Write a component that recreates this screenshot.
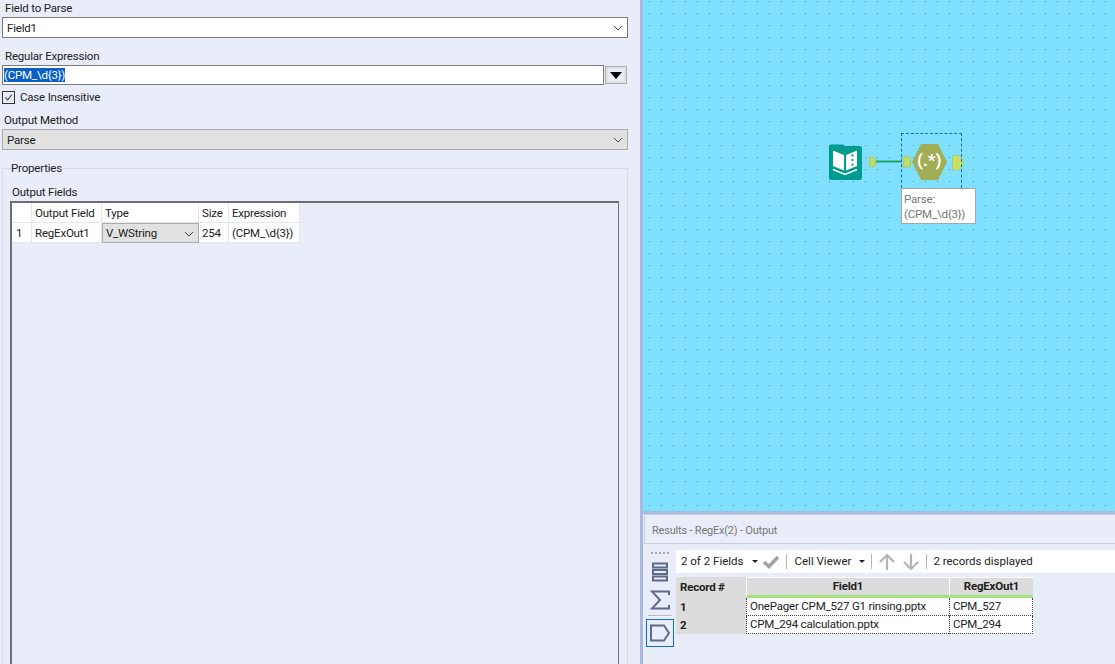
<div class="app">
  <section class="config">
    <label class="lbl first">Field to Parse</label>
    <div class="select"><span>Field1</span><svg class="chev" viewBox="0 0 10 6"><path d="M1 1l4 4 4-4" /></svg></div>

    <label class="lbl second">Regular Expression</label>
    <div class="regex">
      <div class="input"><span class="sel">(CPM_\d{'{'}3{'}'})</span></div>
      <div class="drop"><i></i></div>
    </div>

    <div class="check">
      <span class="box"><svg viewBox="0 0 13 13"><path d="M2.5 6.5l3 3 5-6.5" /></svg></span>
      <span>Case Insensitive</span>
    </div>

    <label class="lbl third">Output Method</label>
    <div class="select grey"><span>Parse</span><svg class="chev" viewBox="0 0 10 6"><path d="M1 1l4 4 4-4" /></svg></div>

    <fieldset class="props">
      <legend>Properties</legend>
      <div class="of">Output Fields</div>
      <div class="gridbox">
        <div class="grid">
          <div class="c n hd"></div>
          <div class="c f hd">Output Field</div>
          <div class="c t hd">Type</div>
          <div class="c s hd">Size</div>
          <div class="c e hd">Expression</div>
          <div class="c n">1</div>
          <div class="c f">RegExOut1</div>
          <div class="c t tsel"><span>V_WString</span><svg class="chev" viewBox="0 0 10 6"><path d="M1 1l4 4 4-4" /></svg></div>
          <div class="c s">254</div>
          <div class="c e">(CPM_\d{'{'}3{'}'})</div>
        </div>
      </div>
    </fieldset>
  </section>

  <div class="split"></div>

  <section class="right">
    <div class="canvas">
      <svg class="dots" width="472" height="511">
        <defs>
          <pattern id="dotp" x="6" y="1" width="12" height="12" patternUnits="userSpaceOnUse">
            <rect width="1" height="1" fill="#5f8a9c" />
          </pattern>
        </defs>
        <rect width="472" height="511" fill="url(#dotp)" />
      </svg>

      <svg class="wf" width="160" height="100" viewBox="0 0 160 100">
        <!-- input book tool -->
        <path d="M3 5.500a2 2 0 0 1 2-2h12l2 1.500h15a2 2 0 0 1 2 2v30a2 2 0 0 1-2 2H5a2 2 0 0 1-2-2z" fill="#009b8f" />
        <path d="M7 9.500l11 4.500v15.500L7 25zM31 9.500L20 14v15.500L31 25z" fill="#fff" />
        <path d="M7 28.500l12 5 12-5" fill="none" stroke="#fff" stroke-width="1.500" />
        <path d="M25.500 14.500h2M25.500 19h2M25.500 23.500h2" stroke="#009b8f" stroke-width="2" />
        <!-- out anchor -->
        <path d="M43.500 16h4l2.500 3v3.500L47.500 26h-4z" fill="#c2dc62" stroke="#9cc05a" stroke-width=".6" />
        <path d="M50 20.500h26" stroke="#22a55a" stroke-width="2" />
        <!-- in anchor -->
        <path d="M76 16h8.500v10H76l2-5z" fill="#c2dc62" stroke="#9cc05a" stroke-width=".6" />
        <!-- hexagon -->
        <path d="M95 3h17l9 18-9 18H95l-9-18z" fill="#a2ae55" />
        <!-- out -->
        <path d="M126.500 14.500h7l4 5v4l-4 5.500h-7z" fill="#c6e166" stroke="#9cc05a" stroke-width=".6" />
      </svg>
      <span class="hexlbl">(.*)</span>
      <div class="selbox"></div>
      <div class="ann">Parse:<br />(CPM_\d{'{'}3{'}'})</div>
    </div>

    <div class="results">
      <div class="rhead">Results - RegEx(2) - Output</div>
      <div class="rbody">
        <aside class="side">
          <div class="grip"></div>
          <svg class="ic one" viewBox="0 0 20 20" width="20" height="20"><g fill="none" stroke="#5d6b8a" stroke-width="2"><rect x="3" y="1.500" width="14" height="4"/><rect x="3" y="8" width="14" height="4"/><rect x="3" y="14.500" width="14" height="4"/></g></svg>
          <svg class="ic two" viewBox="0 0 20 20" width="20" height="20"><path d="M19 5V1.500H2l8 8.500-8 8.500h17V15" fill="none" stroke="#5d6b8a" stroke-width="2"/></svg>
          <div class="rule"></div>
          <div class="active"><svg viewBox="0 0 20 20" width="20" height="20"><path d="M1 2.500h13l5 7.500-5 7.500H1z" fill="none" stroke="#5d6b8a" stroke-width="2"/></svg></div>
        </aside>
        <div class="rmain">
          <div class="tools">
            <span>2 of 2 Fields</span><i class="caret"></i>
            <svg class="okc" width="18" height="14" viewBox="0 0 18 14"><path d="M2 7l5 4.500L16 2" fill="none" stroke="#a3a3a3" stroke-width="3.500"/></svg>
            <b class="bar"></b>
            <span class="cv">Cell Viewer</span><i class="caret"></i>
            <b class="bar"></b>
            <svg class="arr up" width="18" height="18" viewBox="0 0 18 18"><path d="M9 17V2M2 9l7-7 7 7" fill="none" stroke="#b5b5b5" stroke-width="2.200"/></svg>
            <svg class="arr down" width="18" height="18" viewBox="0 0 18 18"><path d="M9 1v15M2 9l7 7 7-7" fill="none" stroke="#b5b5b5" stroke-width="2.200"/></svg>
            <b class="bar"></b>
            <span class="rd">2 records displayed</span>
          </div>
          <div class="data">
            <div class="dh rec">Record #</div>
            <div class="dh col1 head">Field1</div>
            <div class="dh col2 head">RegExOut1</div>
            <div class="dr rec">1</div>
            <div class="dc col1">OnePager CPM_527 G1 rinsing.pptx</div>
            <div class="dc col2">CPM_527</div>
            <div class="dr rec">2</div>
            <div class="dc col1">CPM_294 calculation.pptx</div>
            <div class="dc col2">CPM_294</div>
          </div>
        </div>
      </div>
    </div>
  </section>
</div>

<style>
  :global(body) { margin: 0; background: #e9edf9; }
  .app {
    display: flex;
    width: 1115px;
    height: 664px;
    overflow: hidden;
    font: 11.500px/15px Roboto, "Noto Sans", sans-serif;
    letter-spacing: -0.2px;
    color: #222;
    background: #e9edf9;
  }
  .config { width: 640px; flex: none; padding: 0 12px 0 2px; box-sizing: border-box; display: flex; flex-direction: column; }
  .lbl { display: block; padding-left: 3px; height: 15px; }
  .first { margin-top: 0; margin-bottom: 2px; line-height: 17px; }
  .second { margin-top: 10px; margin-bottom: 2px; line-height: 17px; }
  .third { margin-top: 7px; margin-bottom: 2px; padding-left: 2px; line-height: 17px; }
  .select {
    height: 21px; box-sizing: border-box; border: 1px solid #7a7a7a; background: #fff;
    display: flex; align-items: center; justify-content: space-between; padding: 1px 4px 0; flex: none;
  }
  .select.grey { background: #e1e1e1; border-color: #adadad; }
  .chev { width: 10px; height: 6px; fill: none; stroke: #444; stroke-width: 1; }
  .regex { display: flex; gap: 1px; height: 20px; flex: none; }
  .input { width: 602px; box-sizing: border-box; border: 1px solid #7a7a7a; background: #fff; padding: 0 0 0 1px; display: flex; align-items: center; }
  .sel { background: #0a5fc4; color: #fff; line-height: 14px; }
  .drop { width: 22px; height: 18px; margin-top: 1px; box-sizing: border-box; border: 1px solid #adadad; background: #e1e1e1; padding: 2px; }
  .drop i { display: flex; height: 100%; background: #e9edf9; justify-content: center; align-items: center; }
  .drop i::after { content: ""; border: 6px solid transparent; border-top: 7px solid #000; border-bottom: 0; }
  .check { display: flex; align-items: center; gap: 5px; height: 15px; margin-top: 5px; }
  .box { width: 13px; height: 13px; box-sizing: border-box; border: 1px solid #333; background: #e9edf9; display: block; }
  .box svg { display: block; width: 11px; height: 11px; fill: none; stroke: #333; stroke-width: 1.200; }
  .props {
    margin: 11px 0 0; padding: 0 8px 0 7px; border: 1px solid #d9dbe4; border-bottom: 0; flex: 1; min-height: 0;
    min-width: 0; display: flex; flex-direction: column;
  }
  legend { padding: 0; margin-left: 1px; height: 15px; background: #e9edf9; line-height: 15px; }
  .of { margin: 8px 0 2px 2px; line-height: 17px; height: 15px; }
  .gridbox { flex: 1; box-sizing: border-box; border: 2px solid #6e6e6e; border-bottom: 0; border-width: 2px 1px 0 2px; }
  .grid { display: grid; grid-template-columns: 20px 70px 97px 30px 71px; grid-template-rows: 20px 20px; width: max-content; }
  .c { background: #fff; padding: 1px 3px 0; display: flex; align-items: center; border-right: 1px solid #e4e7f0; border-bottom: 1px solid #e4e7f0; white-space: nowrap; overflow: hidden; box-sizing: border-box; }
  .c.n { padding-left: 4px; }
  .tsel { background: #e1e1e1; border: 1px solid #adadad; justify-content: space-between; padding-right: 4px; }
  .split { width: 3px; background: #aab9e0; flex: none; }
  .right { flex: 1; min-width: 0; display: flex; flex-direction: column; }
  .canvas { height: 511px; flex: none; background: #80e0ff; position: relative; overflow: hidden; }
  .dots { position: absolute; left: 0; top: 0; }
  .wf { position: absolute; left: 183px; top: 141px; }
  .hexlbl { position: absolute; left: 274px; top: 150px; color: #fff; font-weight: 700; font-size: 17px; line-height: 20px; letter-spacing: 0; }
  .selbox { position: absolute; left: 258px; top: 133px; width: 59px; height: 54px; border: 1px dashed #0f6fd0; border-bottom: 0; }
  .ann { position: absolute; left: 258px; top: 188px; width: 75px; height: 36px; box-sizing: border-box; background: #fff; border: 1px solid #a6a6a6; color: #777; padding: 3px 0 0 2px; line-height: 14.500px; }
  .results { flex: 1; min-height: 0; display: flex; flex-direction: column; border-top: 3px solid #aab9e0; }
  .rhead { margin-left: 1px; height: 30px; box-sizing: border-box; border: 1px solid #cfcfd6; border-right: 0; padding: 8px 7px 0; color: #777; font-size: 11px; flex: none; }
  .rbody { flex: 1; display: flex; min-height: 0; margin-top: -1px; }
  .side { width: 33px; flex: none; display: flex; flex-direction: column; align-items: center; padding-top: 9px; box-sizing: border-box; }
  .grip { width: 18px; border-top: 2px dotted #9aa; margin-bottom: 8px; }
  .one { margin-bottom: 8px; }
  .two { margin-bottom: 4px; }
  .rule { width: 24px; border-top: 1px solid #bbb; margin: 1px 0 3px; }
  .active { width: 28px; height: 28px; box-sizing: border-box; border: 1px solid #0f6fd0; display: flex; align-items: center; justify-content: center; }
  .rmain { flex: 1; min-width: 0; padding-top: 7px; }
  .tools { height: 23px; background: #fff; display: flex; align-items: center; padding-left: 5px; white-space: nowrap; margin-bottom: 4px; letter-spacing: 0; }
  .caret { width: 0; height: 0; border: 3px solid transparent; border-top: 3px solid #222; border-bottom: 0; margin-left: 8px; }
  .okc { margin-left: 4px; }
  .bar { width: 1px; height: 15px; background: #b5b5b5; margin: 0 5px 0 6px; }
  .cv { margin-left: 3px; }
  .rd { margin-left: 1px; }
  .up { margin-left: 1px; margin-right: 6px; }
  .down { margin-right: 0; }
  .data { display: grid; grid-template-columns: 70px 203px 84px; grid-template-rows: 21px 18px 18px; width: max-content; }
  .dh, .dr { background: #dcdcdc; font-weight: 700; display: flex; align-items: center; padding-left: 4px; box-sizing: border-box; }
  .head { justify-content: center; padding: 0; border-left: 1px solid #fff; border-bottom: 3px solid #a2e27f; border-top: 1px solid #fff; }
  .dc { background: #fff; padding-left: 3px; display: flex; align-items: center; box-sizing: border-box; border-left: 1px dotted #444; border-bottom: 1px dotted #444; white-space: nowrap; }
  .col2 { border-right: 1px dotted #444; }
  .head.col2 { border-right: 0; }
</style>
